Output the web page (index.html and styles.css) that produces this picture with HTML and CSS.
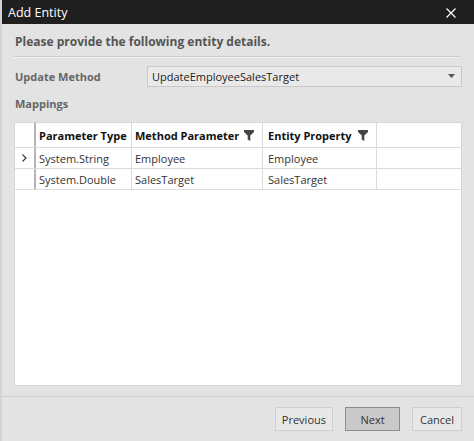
FILE: index.html
```html
<!DOCTYPE html>
<html lang="en">
<head>
<meta charset="UTF-8" />
<title>Add Entity</title>
<link rel="stylesheet" href="styles.css">
</head>
<body>
<div class="dialog">
  <div class="titlebar">
    <span class="title">Add Entity</span>
    <svg class="close" width="10" height="10" viewBox="0 0 10 10"><path d="M0.5 0.5 L9.5 9.5 M9.5 0.5 L0.5 9.5" stroke="#fff" stroke-width="1.2"/></svg>
  </div>
  <div class="content">
    <div class="intro">Please provide the following entity details.</div>
    <div class="field-row">
      <label class="field-label">Update Method</label>
      <div class="combo">
        <span>UpdateEmployeeSalesTarget</span>
        <svg width="7" height="4" viewBox="0 0 7 4"><path d="M0 0 L7 0 L3.5 4 Z" fill="#555"/></svg>
      </div>
    </div>
    <div class="section-label">Mappings</div>
    <div class="grid">
      <div class="grid-row head">
        <div class="cell ind"></div>
        <div class="cell c1">Parameter Type</div>
        <div class="cell c2">Method Parameter
          <svg class="filter" width="10" height="11" viewBox="0 0 10 11"><path d="M0 0 H10 V2 L6.3 5.5 V11 L3.7 9.5 V5.5 L0 2 Z" fill="#444"/></svg>
        </div>
        <div class="cell c3">Entity Property
          <svg class="filter" width="10" height="11" viewBox="0 0 10 11"><path d="M0 0 H10 V2 L6.3 5.5 V11 L3.7 9.5 V5.5 L0 2 Z" fill="#444"/></svg>
        </div>
        <div class="cell c4"></div>
      </div>
      <div class="grid-row">
        <div class="cell ind"><svg width="5" height="8" viewBox="0 0 5 8"><path d="M0.5 0.5 L4 4 L0.5 7.5" stroke="#333" fill="none" stroke-width="1.1"/></svg></div>
        <div class="cell c1">System.String</div>
        <div class="cell c2">Employee</div>
        <div class="cell c3">Employee</div>
        <div class="cell c4"></div>
      </div>
      <div class="grid-row">
        <div class="cell ind"></div>
        <div class="cell c1">System.Double</div>
        <div class="cell c2">SalesTarget</div>
        <div class="cell c3">SalesTarget</div>
        <div class="cell c4"></div>
      </div>
    </div>
  </div>
  <div class="footer">
    <button class="btn">Previous</button>
    <button class="btn primary">Next</button>
    <button class="btn">Cancel</button>
  </div>
</div>
</body>
</html>
```

FILE: styles.css
```css
html, body {
  margin: 0;
  padding: 0;
}
body {
  font-family: "Open Sans", "Noto Sans", sans-serif;
  font-size: 11px;
  color: #222;
  background: #e3e3e3;
}
.dialog {
  width: 474px;
  height: 441px;
  display: flex;
  flex-direction: column;
  background: #e3e3e3;
  border-left: 2px solid #d3d3d3;
  box-sizing: border-box;
}
.titlebar {
  height: 24px;
  background: #1f1f1f;
  color: #fff;
  display: flex;
  align-items: center;
  justify-content: space-between;
  padding: 0 18px 0 6px;
  font-size: 12.5px;
  flex-shrink: 0;
}
.titlebar .close {
  margin-top: 1px;
}
.content {
  padding: 0 12px 0 12px;
  flex: 1;
  display: flex;
  flex-direction: column;
}
.intro {
  height: 32px;
  line-height: 35px;
  font-weight: 700;
  font-size: 12px;
  color: #555;
  padding-left: 1px;
  border-bottom: 1px solid #cdcdcd;
  box-shadow: 0 1px 0 #f0f0f0;
  margin-right: 2px;
}
.field-row {
  display: flex;
  align-items: center;
  margin-top: 8px;
  height: 22px;
}
.field-label, .section-label {
  font-weight: 700;
  color: #666;
  font-size: 11px;
  padding-left: 1px;
}
.field-label {
  width: 132px;
}
.combo {
  flex: 1;
  height: 21px;
  box-sizing: border-box;
  border: 1px solid #c9c9c9;
  background: #e9e9e9;
  display: flex;
  align-items: center;
  justify-content: space-between;
  padding: 0 6px 0 4px;
  color: #222;
}
.section-label {
  margin-top: 7px;
  height: 20px;
  line-height: 20px;
}
.grid {
  margin-top: 8px;
  height: 262px;
  background: #fff;
  border: 1px solid #d6d6d6;
}
.grid-row {
  display: flex;
  height: 20px;
  border-bottom: 1px solid #dcdcdc;
}
.grid-row.head {
  height: 24px;
  font-weight: 700;
  color: #222;
}
.cell {
  display: flex;
  align-items: center;
  padding-left: 3px;
  border-right: 1px solid #dcdcdc;
  box-sizing: border-box;
  color: #333;
}
.head .cell {
  color: #111;
}
.cell.ind {
  width: 21px;
  border-right: 2px solid #b5b5b5;
  justify-content: center;
  padding-left: 0;
}
.cell.c1 { width: 96px; }
.cell.c2 { width: 131px; justify-content: space-between; padding-right: 8px; }
.cell.c3 { width: 114px; justify-content: space-between; padding-right: 8px; padding-left: 5px; }
.cell.c4 { flex: 1; border-right: none; }
.footer {
  height: 44px;
  border-top: 1px solid #cfcfcf;
  display: flex;
  justify-content: flex-end;
  align-items: center;
  gap: 12px;
  padding: 0 12px 0 0;
  flex-shrink: 0;
}
.btn {
  font-family: inherit;
  font-size: 11px;
  height: 24px;
  background: #e8e8e8;
  border: 1px solid #cfcfcf;
  color: #333;
  padding: 0 6px;
  min-width: 50px;
}
.btn.primary {
  background: #c9c9c9;
  border-color: #8c8c8c;
  min-width: 55px;
}
```
